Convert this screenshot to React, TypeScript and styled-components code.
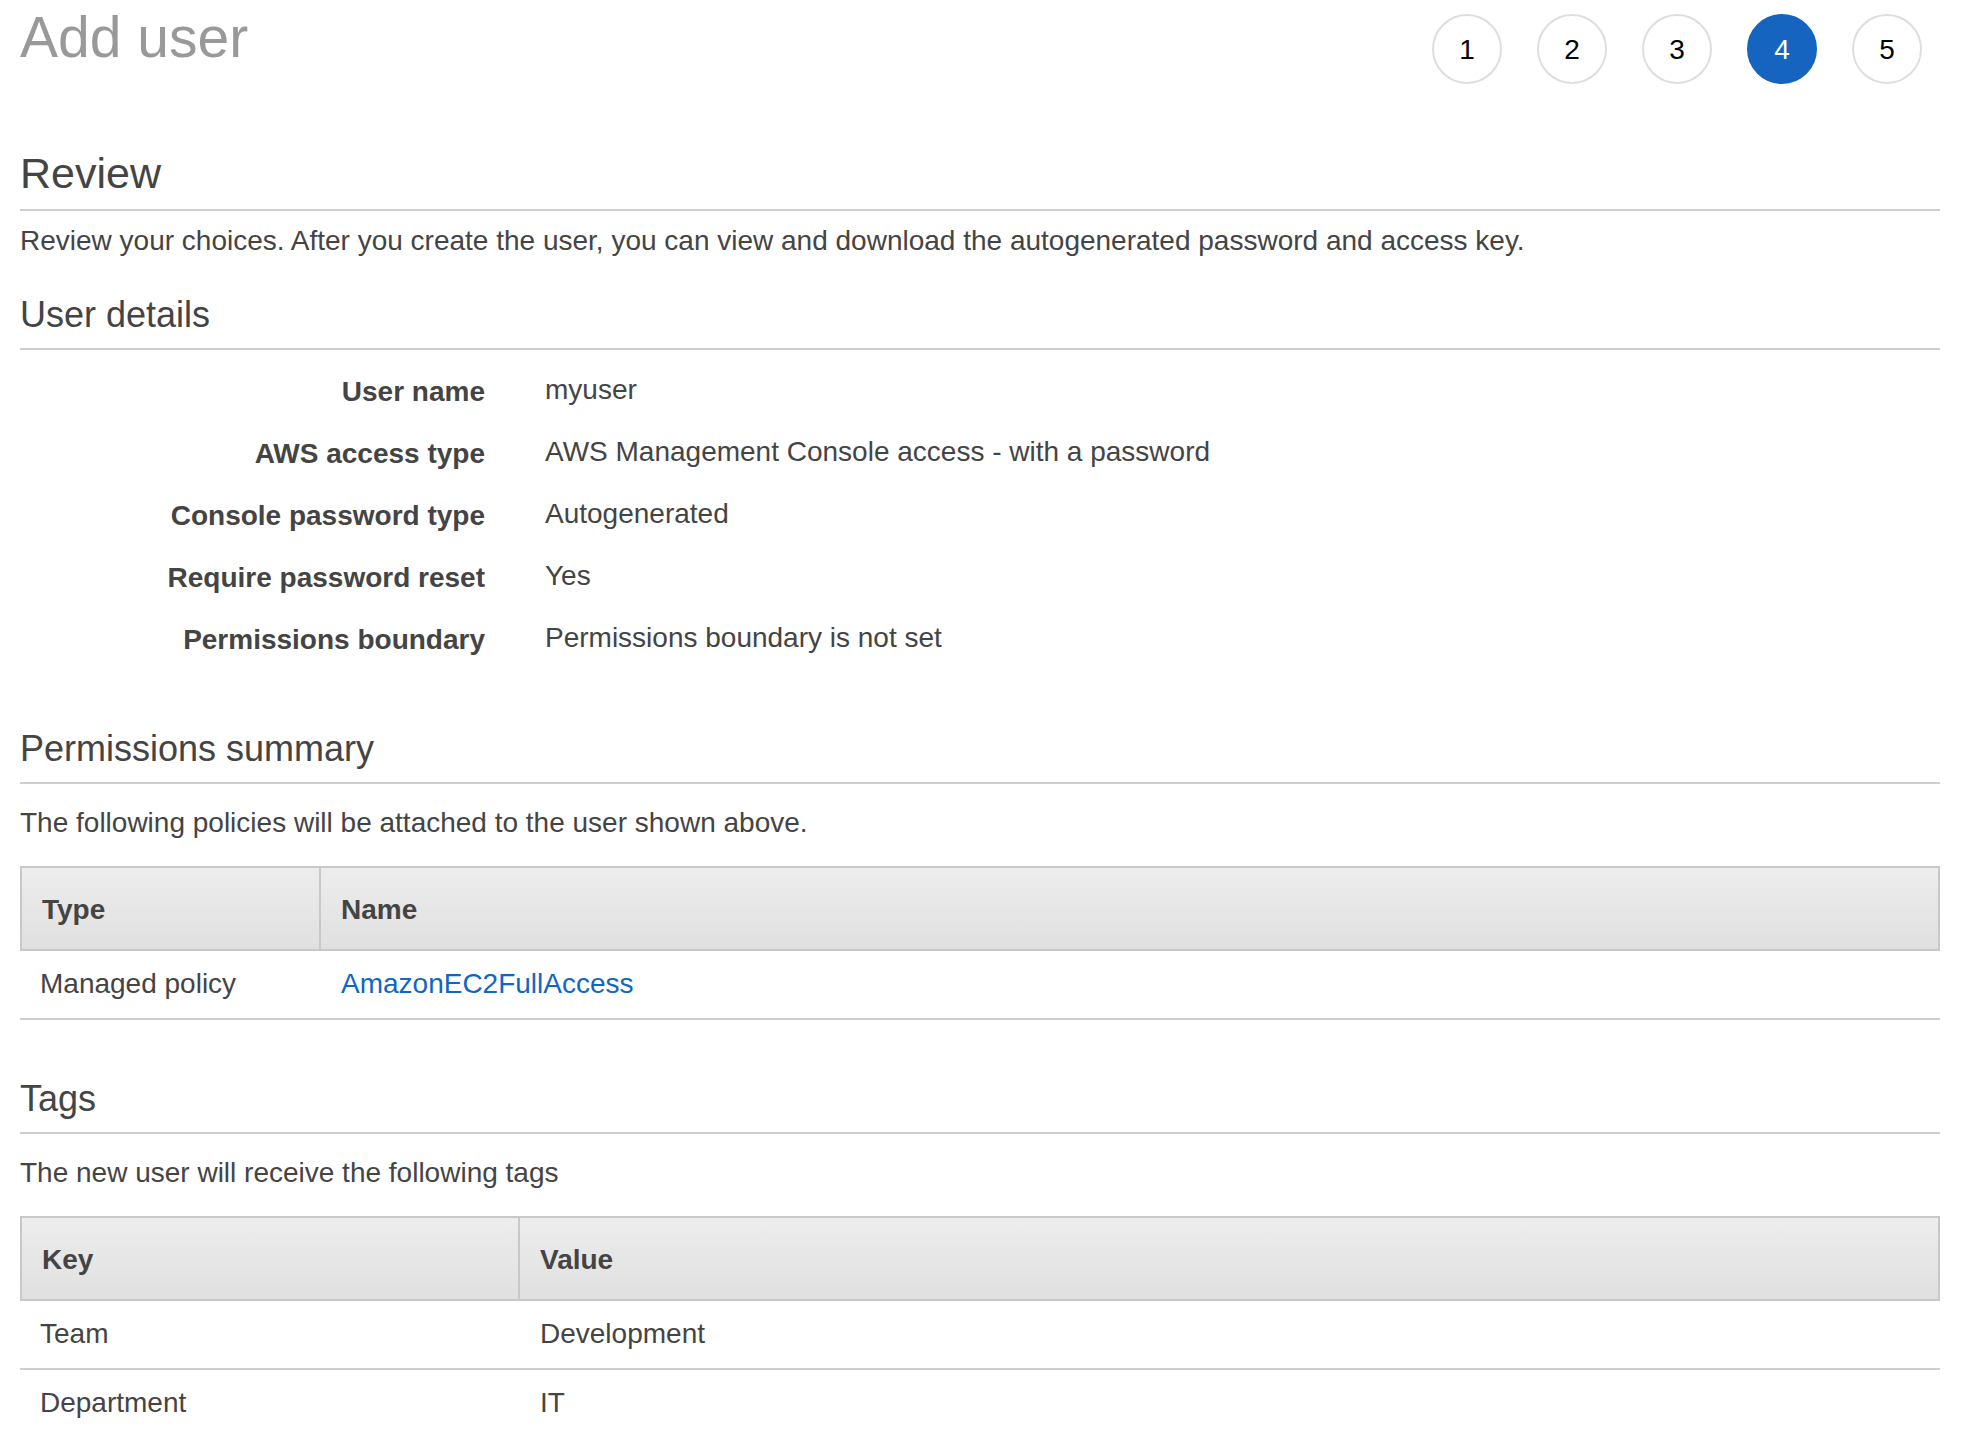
import React from 'react'
import styled, { createGlobalStyle } from 'styled-components'

const GlobalStyle = createGlobalStyle`
  html, body {
    margin: 0;
    padding: 0;
    background: #fff;
  }
  body {
    font-family: "Liberation Sans", Arial, Helvetica, sans-serif;
    color: #444;
  }
`

const Page = styled.div`
  padding: 0 22px 0 20px;
`

const TopBar = styled.div`
  display: flex;
  justify-content: space-between;
  align-items: flex-start;
`

const PageTitle = styled.h1`
  margin: 9px 0 0 0;
  font-size: 57px;
  line-height: 56px;
  font-weight: normal;
  color: #999;
`

const Steps = styled.ol`
  display: flex;
  gap: 35px;
  list-style: none;
  margin: 0 18px 0 0;
  padding: 14px 0 0 0;
`

const StepCircle = styled.li<{ $active?: boolean }>`
  width: 70px;
  height: 70px;
  box-sizing: border-box;
  border-radius: 50%;
  border: 2px solid ${p => (p.$active ? '#1565c0' : '#dedede')};
  background: ${p => (p.$active ? '#1565c0' : '#fff')};
  color: ${p => (p.$active ? '#fff' : '#000')};
  display: flex;
  align-items: center;
  justify-content: center;
  font-size: 28px;
  line-height: 1;
  padding-top: 2px;
`

const SectionHeading = styled.h2<{ $top: number }>`
  margin: ${p => p.$top}px 0 0 0;
  padding-bottom: 12px;
  border-bottom: 2px solid #cfcfcf;
  font-size: 36px;
  line-height: 42px;
  font-weight: normal;
  color: #444;
`

const ReviewHeading = styled(SectionHeading)`
  font-size: 43px;
  line-height: 50px;
  padding-bottom: 11px;
`

const Description = styled.p<{ $top: number }>`
  margin: ${p => p.$top}px 0 0 0;
  font-size: 28px;
  line-height: 34px;
`

const DetailList = styled.div`
  margin-top: 8px;
`

const DetailRow = styled.div`
  display: grid;
  grid-template-columns: 465px 1fr;
  column-gap: 60px;
  font-size: 28px;
  line-height: 62px;
`

const DetailLabel = styled.div`
  text-align: right;
  font-weight: bold;
  padding-top: 6px;
  line-height: 56px;
`

const DetailValue = styled.div`
  padding-top: 2px;
  line-height: 60px;
`

const DataTable = styled.table<{ $firstCol: number }>`
  margin-top: 26px;
  width: 100%;
  border-collapse: separate;
  border-spacing: 0;
  table-layout: fixed;
  font-size: 28px;
  line-height: 34px;

  col:first-child {
    width: ${p => p.$firstCol}px;
  }
`

const Th = styled.th`
  text-align: left;
  font-weight: bold;
  padding: 25px 20px 22px 20px;
  background: linear-gradient(#ededed, #e0e0e0);
  border-top: 2px solid #c8c8c8;
  border-bottom: 2px solid #c8c8c8;
  border-right: 2px solid #c8c8c8;

  &:first-child {
    border-left: 2px solid #c8c8c8;
  }
`

const Td = styled.td`
  text-align: left;
  padding: 16px 20px 17px 20px;
  border-bottom: 2px solid #cfcfcf;
`

const PolicyLink = styled.a`
  color: #1166c4;
  text-decoration: none;
`

const details = [
  ['User name', 'myuser'],
  ['AWS access type', 'AWS Management Console access - with a password'],
  ['Console password type', 'Autogenerated'],
  ['Require password reset', 'Yes'],
  ['Permissions boundary', 'Permissions boundary is not set'],
]

const tags = [
  ['Team', 'Development'],
  ['Department', 'IT'],
]

const App: React.FC = () => {
  return (
    <Page>
      <GlobalStyle />
      <TopBar>
        <PageTitle>Add user</PageTitle>
        <Steps>
          {[1, 2, 3, 4, 5].map(n => (
            <StepCircle key={n} $active={n === 4}>{n}</StepCircle>
          ))}
        </Steps>
      </TopBar>

      <ReviewHeading $top={64}>Review</ReviewHeading>
      <Description $top={13}>
        Review your choices. After you create the user, you can view and download the autogenerated password and access key.
      </Description>

      <SectionHeading $top={36}>User details</SectionHeading>
      <DetailList>
        {details.map(([label, value]) => (
          <DetailRow key={label}>
            <DetailLabel>{label}</DetailLabel>
            <DetailValue>{value}</DetailValue>
          </DetailRow>
        ))}
      </DetailList>

      <SectionHeading $top={60}>Permissions summary</SectionHeading>
      <Description $top={22}>The following policies will be attached to the user shown above.</Description>
      <DataTable $firstCol={301}>
        <colgroup>
          <col />
          <col />
        </colgroup>
        <thead>
          <tr>
            <Th>Type</Th>
            <Th>Name</Th>
          </tr>
        </thead>
        <tbody>
          <tr>
            <Td>Managed policy</Td>
            <Td><PolicyLink href="#">AmazonEC2FullAccess</PolicyLink></Td>
          </tr>
        </tbody>
      </DataTable>

      <SectionHeading $top={58}>Tags</SectionHeading>
      <Description $top={22}>The new user will receive the following tags</Description>
      <DataTable $firstCol={500}>
        <colgroup>
          <col />
          <col />
        </colgroup>
        <thead>
          <tr>
            <Th>Key</Th>
            <Th>Value</Th>
          </tr>
        </thead>
        <tbody>
          {tags.map(([key, value]) => (
            <tr key={key}>
              <Td>{key}</Td>
              <Td>{value}</Td>
            </tr>
          ))}
        </tbody>
      </DataTable>
    </Page>
  )
}

export default App
